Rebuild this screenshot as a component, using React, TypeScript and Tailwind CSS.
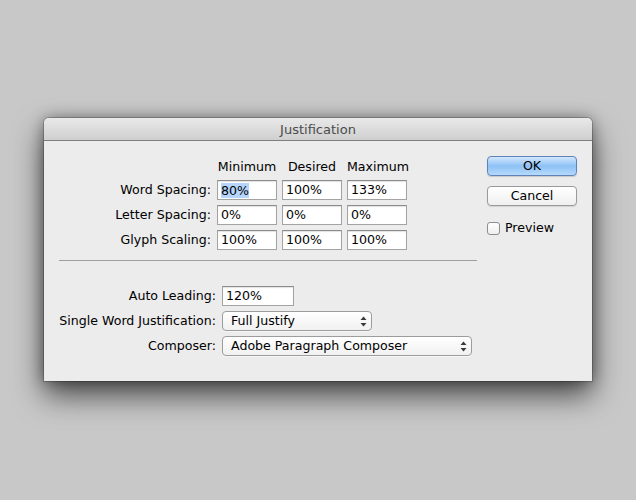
import React from "react";

const font = { fontFamily: '"DejaVu Sans", "Liberation Sans", sans-serif' };

function Field({ value, selected, width = "w-[60px]" }: { value: string; selected?: boolean; width?: string }) {
  return (
    <div
      className={`${width} h-[20px] bg-white border border-[#a3a3a3] border-t-[#8c8c8c] shadow-[inset_0_1px_1px_rgba(0,0,0,0.12)] flex items-center px-[3px] pt-[1px] text-[12.6px] text-black`}
    >
      {selected ? <span className="bg-[#b5d5fd] leading-[15px]">{value}</span> : <span>{value}</span>}
    </div>
  );
}

function Arrows() {
  return (
    <svg width="7" height="11" viewBox="0 0 7 11" className="shrink-0">
      <path d="M3.5 0.5 L6.5 4 L0.5 4 Z" fill="#3a3a3a" />
      <path d="M3.5 10.5 L6.5 7 L0.5 7 Z" fill="#3a3a3a" />
    </svg>
  );
}

function Popup({ value, width }: { value: string; width: string }) {
  return (
    <div
      className={`${width} h-[20px] rounded-[4px] border border-[#9c9c9c] bg-gradient-to-b from-white to-[#f1f1f1] shadow-[0_1px_0_rgba(255,255,255,0.6)] flex items-center justify-between pl-[8px] pr-[4px] text-[12.6px] text-black`}
    >
      <span>{value}</span>
      <Arrows />
    </div>
  );
}

function Row({ label, values }: { label: string; values: string[] }) {
  return (
    <div className="flex items-center h-[20px]">
      <div className="w-[173px] pr-[6px] pt-[1px] text-right text-[12.6px] text-black">{label}</div>
      <div className="flex gap-[5px]">
        {values.map((v, i) => (
          <Field key={i} value={v} selected={label === "Word Spacing:" && i === 0} />
        ))}
      </div>
    </div>
  );
}

export default function App() {
  return (
    <div className="w-[636px] h-[500px] bg-[#c8c8c9] pl-[44px] pt-[118px] overflow-hidden" style={font}>
      <div className="w-[548px] h-[263px] bg-[#ececec] rounded-t-[5px] shadow-[0_14px_30px_rgba(0,0,0,0.65),0_0_14px_rgba(0,0,0,0.35),0_0_0_1px_rgba(0,0,0,0.2)] flex flex-col overflow-hidden">
        {/* title bar */}
        <div className="h-[23px] shrink-0 bg-gradient-to-b from-[#e9e9e9] to-[#cfcfcf] border-b border-[#7f7f7f] flex items-center justify-center pt-[2px] text-[13px] text-[#4b4b4b]">
          Justification
        </div>

        <div className="flex flex-1">
          {/* left content */}
          <div className="flex-1 pt-[18px]">
            <div className="flex gap-[5px] ml-[173px] h-[16px] items-center text-[12.6px] text-black">
              <div className="w-[60px] text-center">Minimum</div>
              <div className="w-[60px] text-center">Desired</div>
              <div className="w-[60px] text-center">Maximum</div>
            </div>

            <div className="mt-[5px] flex flex-col gap-[5px]">
              <Row label="Word Spacing:" values={["80%", "100%", "133%"]} />
              <Row label="Letter Spacing:" values={["0%", "0%", "0%"]} />
              <Row label="Glyph Scaling:" values={["100%", "100%", "100%"]} />
            </div>

            <div className="mt-[10px] ml-[15px] w-[418px] h-px bg-[#9e9e9e]" />

            <div className="mt-[25px] flex flex-col gap-[5px]">
              <div className="flex items-center h-[20px]">
                <div className="w-[178px] pr-[6px] pt-[1px] text-right text-[12.6px] text-black">Auto Leading:</div>
                <Field value="120%" width="w-[72px]" />
              </div>
              <div className="flex items-center h-[20px]">
                <div className="w-[178px] pr-[6px] pt-[1px] text-right text-[12.6px] text-black whitespace-nowrap">Single Word Justification:</div>
                <Popup value="Full Justify" width="w-[150px]" />
              </div>
              <div className="flex items-center h-[20px]">
                <div className="w-[178px] pr-[6px] pt-[1px] text-right text-[12.6px] text-black">Composer:</div>
                <Popup value="Adobe Paragraph Composer" width="w-[250px]" />
              </div>
            </div>
          </div>

          {/* right buttons */}
          <div className="w-[90px] mr-[15px] pt-[15px] flex flex-col">
            <div className="h-[20px] rounded-[4px] border border-[#5f83b9] bg-gradient-to-b from-[#d3e8fd] via-[#8ec1f6] to-[#b5dafc] shadow-[0_1px_1px_rgba(0,0,0,0.15)] flex items-center justify-center text-[12.6px] text-black">
              OK
            </div>
            <div className="mt-[10px] h-[20px] rounded-[4px] border border-[#9a9a9a] bg-gradient-to-b from-white to-[#f0f0f0] shadow-[0_1px_1px_rgba(0,0,0,0.1)] flex items-center justify-center text-[12.6px] text-black">
              Cancel
            </div>
            <div className="mt-[13px] flex items-center gap-[5px] text-[12.6px] text-black">
              <div className="w-[13px] h-[13px] rounded-[3px] border border-[#8e8e8e] bg-gradient-to-b from-white to-[#eeeeee]" />
              <span>Preview</span>
            </div>
          </div>
        </div>
      </div>
    </div>
  );
}
